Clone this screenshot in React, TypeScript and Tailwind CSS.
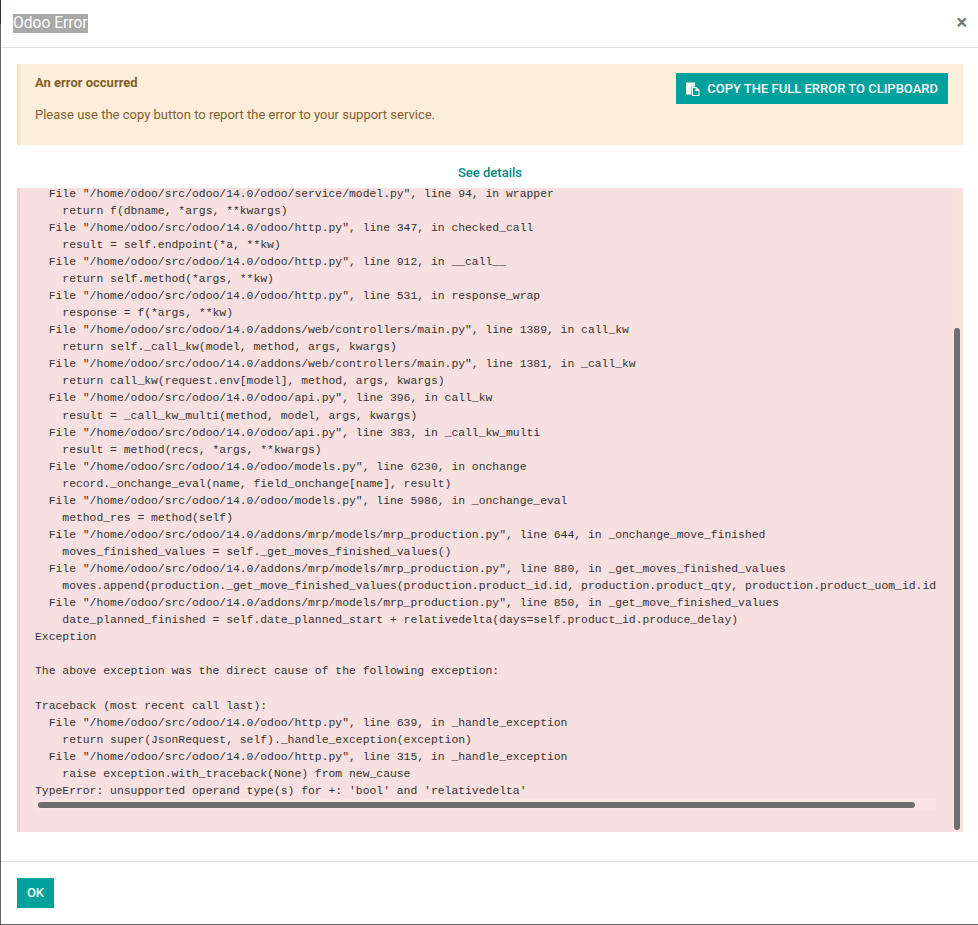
const lines = [
  `  File "/home/odoo/src/odoo/14.0/odoo/service/model.py", line 94, in wrapper`,
  `    return f(dbname, *args, **kwargs)`,
  `  File "/home/odoo/src/odoo/14.0/odoo/http.py", line 347, in checked_call`,
  `    result = self.endpoint(*a, **kw)`,
  `  File "/home/odoo/src/odoo/14.0/odoo/http.py", line 912, in __call__`,
  `    return self.method(*args, **kw)`,
  `  File "/home/odoo/src/odoo/14.0/odoo/http.py", line 531, in response_wrap`,
  `    response = f(*args, **kw)`,
  `  File "/home/odoo/src/odoo/14.0/addons/web/controllers/main.py", line 1389, in call_kw`,
  `    return self._call_kw(model, method, args, kwargs)`,
  `  File "/home/odoo/src/odoo/14.0/addons/web/controllers/main.py", line 1381, in _call_kw`,
  `    return call_kw(request.env[model], method, args, kwargs)`,
  `  File "/home/odoo/src/odoo/14.0/odoo/api.py", line 396, in call_kw`,
  `    result = _call_kw_multi(method, model, args, kwargs)`,
  `  File "/home/odoo/src/odoo/14.0/odoo/api.py", line 383, in _call_kw_multi`,
  `    result = method(recs, *args, **kwargs)`,
  `  File "/home/odoo/src/odoo/14.0/odoo/models.py", line 6230, in onchange`,
  `    record._onchange_eval(name, field_onchange[name], result)`,
  `  File "/home/odoo/src/odoo/14.0/odoo/models.py", line 5986, in _onchange_eval`,
  `    method_res = method(self)`,
  `  File "/home/odoo/src/odoo/14.0/addons/mrp/models/mrp_production.py", line 644, in _onchange_move_finished`,
  `    moves_finished_values = self._get_moves_finished_values()`,
  `  File "/home/odoo/src/odoo/14.0/addons/mrp/models/mrp_production.py", line 880, in _get_moves_finished_values`,
  `    moves.append(production._get_move_finished_values(production.product_id.id, production.product_qty, production.product_uom_id.id`,
  `  File "/home/odoo/src/odoo/14.0/addons/mrp/models/mrp_production.py", line 850, in _get_move_finished_values`,
  `    date_planned_finished = self.date_planned_start + relativedelta(days=self.product_id.produce_delay)`,
  `Exception`,
  ``,
  `The above exception was the direct cause of the following exception:`,
  ``,
  `Traceback (most recent call last):`,
  `  File "/home/odoo/src/odoo/14.0/odoo/http.py", line 639, in _handle_exception`,
  `    return super(JsonRequest, self)._handle_exception(exception)`,
  `  File "/home/odoo/src/odoo/14.0/odoo/http.py", line 315, in _handle_exception`,
  `    raise exception.with_traceback(None) from new_cause`,
  `TypeError: unsupported operand type(s) for +: 'bool' and 'relativedelta'`,
];

export default function App() {
  return (
    <div className="relative w-[978px] h-[925px] flex flex-col bg-white border-l border-b border-[#666666] font-['Roboto',sans-serif] text-[13px] leading-[19.5px] text-[#4c4c4c]">
      <div className="absolute left-[-1px] top-0 w-[1px] h-[24px] bg-[#3b2a35]" />
      <header className="h-[48px] shrink-0 border-b border-[#dee2e6] flex items-start justify-between pl-[12px] pr-[11px] pt-[14px]">
        <h4 className="text-[15.6px] leading-[19px] font-normal bg-[#a9a9a9] text-white">Odoo Error</h4>
        <span className="mt-[-1px] text-[#777777] text-[20px] leading-[19px] font-bold">×</span>
      </header>
      <main className="flex-1 min-h-0 pl-[16px] pr-[15px] pt-[16px] flex flex-col">
        <section className="h-[81px] shrink-0 bg-[#fbeedb] border-l-[3px] border-[#fbe3c4] text-[#856030] pl-[15px] pr-[15px] pt-[9px] flex justify-between">
          <div>
            <p className="font-bold leading-[19.5px] text-[#85601f]">An error occurred</p>
            <p className="mt-[12.5px]">Please use the copy button to report the error to your support service.</p>
          </div>
          <button className="h-[31px] flex items-center gap-[7px] bg-[#00a09d] text-white font-medium uppercase pl-[10px] pr-[10px] text-[13px] leading-[19.5px]">
            <svg width="14" height="14" viewBox="0 0 14 14" fill="currentColor">
              <path d="M0 .5h9v4H5.5v8H0z" />
              <path fillRule="evenodd" d="M6 5h4.5l3 3v6H6zM7 6v7h5.5V9H9.5V6z" />
            </svg>
            Copy the full error to clipboard
          </button>
        </section>
        <div className="h-[43px] shrink-0 flex items-center justify-center pt-[12px] text-[#008784] font-medium">See details</div>
        <section className="relative h-[644px] shrink-0 bg-[#f8e0e0] border-l-[3px] border-[#f5cfcf] overflow-hidden">
          <div className="w-[917px] overflow-hidden">
            <pre className="mt-[-2.3px] pl-[15px] font-['Liberation_Mono',monospace] text-[11.39px] leading-[17.06px] text-[#333333] whitespace-pre">
              {lines.join("\n")}
            </pre>
          </div>
          <div className="absolute left-[15px] top-[611px] w-[901px] h-[12px] bg-[#f9e4e3]">
            <div className="ml-[3px] mt-[3px] w-[877px] h-[6px] rounded-full bg-[#6e6e6e]" />
          </div>
          <div className="absolute right-0 top-0 bottom-0 w-[12px] bg-[#f7e2de]">
            <div className="absolute left-[3px] top-[140px] bottom-[2px] w-[6px] rounded-full bg-[#6e6e6e]" />
          </div>
        </section>
      </main>
      <footer className="h-[63px] shrink-0 border-t border-[#dee2e6] pl-[16px] pt-[16px]">
        <button className="w-[37px] h-[30px] bg-[#00a09d] text-white font-medium text-[13px] uppercase">Ok</button>
      </footer>
    </div>
  );
}
